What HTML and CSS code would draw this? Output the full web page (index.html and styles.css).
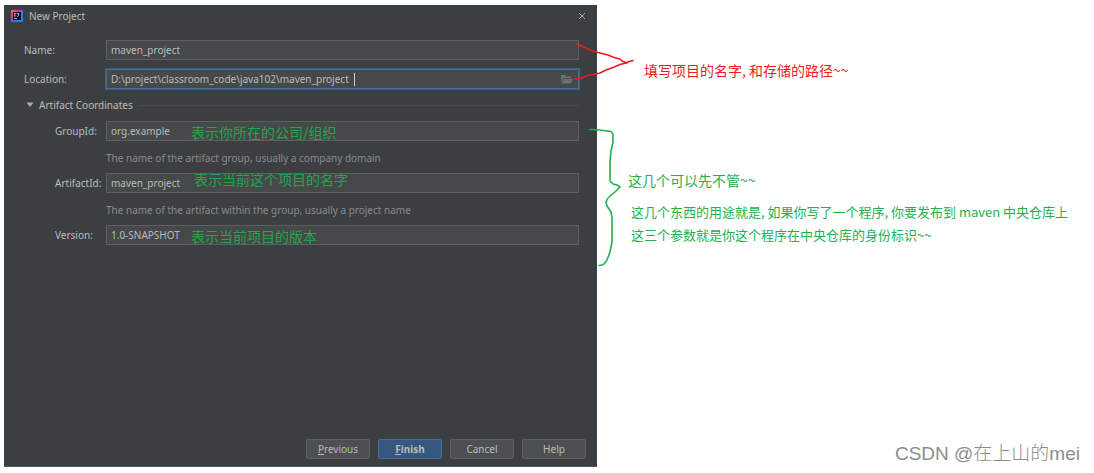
FILE: index.html
```html
<!DOCTYPE html>
<html lang="zh-CN">
<head>
    <meta charset="UTF-8">
    <title>New Project</title>
    <link rel="stylesheet" href="styles.css">
</head>
<body>
    <div class="page">
        <form class="dialog">
            <header class="titlebar">
                <svg class="logo" viewBox="0 0 12 12" aria-hidden="true">
                    <defs>
                        <linearGradient id="logoFill" x1="0" y1="0" x2="1" y2="1">
                            <stop offset="0" stop-color="#f97a3c"/>
                            <stop offset="0.3" stop-color="#e0348c"/>
                            <stop offset="0.55" stop-color="#3b6cf0"/>
                            <stop offset="1" stop-color="#1c8bf5"/>
                        </linearGradient>
                    </defs>
                    <rect width="12" height="12" rx="1" fill="url(#logoFill)"/>
                    <rect x="2" y="2" width="8" height="8" fill="#140a1e"/>
                    <path d="M3 3.5h1.6M3.8 3.5v2.6M3 6.1h1.6M5.8 3.5h1.8v2q0 .7-.8.7h-1M3 8.6h3" fill="none" stroke="#e8e0ee" stroke-width=".8"/>
                </svg>
                <h1>New Project</h1>
                <button type="button" class="close" aria-label="Close">
                    <svg viewBox="0 0 8 8"><path d="M1 1l6 6M7 1l-6 6"/></svg>
                </button>
            </header>

            <div class="fields">
                <div class="row">
                    <label for="name">Name:</label>
                    <div class="control"><input type="text" id="name" value="maven_project"></div>
                </div>
                <div class="row">
                    <label for="location">Location:</label>
                    <div class="control active">
                        <input type="text" id="location" value="D:\project\classroom_code\java102\maven_project">
                        <span class="caret"></span>
                        <svg class="folder" viewBox="0 0 12 10" aria-hidden="true">
                            <path d="M0 1h4l1 1.500h5V4H2.500L0 8.500z"/>
                            <path d="M3 4.800h9L10 9.500H.5z"/>
                        </svg>
                    </div>
                </div>
            </div>

            <details class="coords" open>
                <summary>
                    <svg class="arrow" viewBox="0 0 8 6" aria-hidden="true"><path d="M0.500 0.500h7L4 5z"/></svg>
                    Artifact Coordinates
                </summary>
                <div class="row">
                    <label for="groupId">GroupId:</label>
                    <div class="control">
                        <input type="text" id="groupId" value="org.example">
                        <span class="remark">表示你所在的公司/组织</span>
                    </div>
                </div>
                <p class="hint">The name of the artifact group, usually a company domain</p>
                <div class="row">
                    <label for="artifactId">ArtifactId:</label>
                    <div class="control">
                        <input type="text" id="artifactId" value="maven_project">
                        <span class="remark raised">表示当前这个项目的名字</span>
                    </div>
                </div>
                <p class="hint">The name of the artifact within the group, usually a project name</p>
                <div class="row">
                    <label for="version">Version:</label>
                    <div class="control">
                        <input type="text" id="version" value="1.0-SNAPSHOT">
                        <span class="remark">表示当前项目的版本</span>
                    </div>
                </div>
            </details>

            <footer class="buttons">
                <button type="button"><u>P</u>revious</button>
                <button type="button" class="primary"><u>F</u>inish</button>
                <button type="button">Cancel</button>
                <button type="button">Help</button>
            </footer>

            <svg class="strokes" viewBox="570 40 70 230" aria-hidden="true">
                <path class="red" d="M577 44L583 46.500L590 50L598 52.500L608 55L614 57.500L620 59L622 61L627 63"/>
                <path class="red" d="M574 79L580 78.500L588 75.500L600 73L606 70L613 67.500L620 64.500L626 63L629 61.500L633 60.500"/>
                <path class="green" d="M590 129.500L600 130L607 131L611 131.500L613 134V142L611 151L610 162V181L613 184L617 185L620 187L616 191L608 198L606 202L607 206L611 212L612 218V242L610 252L607 260L604 264L602 265L599 265.500"/>
            </svg>
        </form>

        <section class="notes">
            <p class="note warn">填写项目的名字, 和存储的路径~~</p>
            <p class="note">这几个可以先不管~~</p>
            <p class="note detail">这几个东西的用途就是, 如果你写了一个程序, 你要发布到 maven 中央仓库上<br>这三个参数就是你这个程序在中央仓库的身份标识~~</p>
            <p class="watermark">CSDN @在上山的mei</p>
        </section>
    </div>
</body>
</html>
```
FILE: styles.css
```css
* {
    box-sizing: border-box;
}
body {
    margin: 0;
    background: #fff;
    font-family: "Noto Sans", "Noto Sans CJK SC", sans-serif;
    font-size: 10px;
}
.page {
    display: grid;
    grid-template-columns: 593fr 497fr;
    min-height: 100vh;
    padding: 5px 0 6px 4px;
}
.dialog {
    position: relative;
    display: flex;
    flex-direction: column;
    background: #3c3f41;
    color: #bbb;
    border-bottom: 1px solid #55585a;
}
.titlebar {
    display: flex;
    align-items: center;
    height: 21px;
    padding: 0 11px 0 7px;
}
.titlebar h1 {
    flex: 1;
    margin: 0 0 0 6px;
    font-size: 10px;
    font-weight: normal;
}
.logo {
    width: 12px;
    height: 12px;
}
.close {
    display: flex;
    padding: 0;
    border: none;
    background: none;
}
.close svg {
    width: 8px;
    height: 8px;
    fill: none;
    stroke: #a9abac;
}
.fields {
    display: grid;
    gap: 9px;
    padding: 14px 0 6px;
}
.row {
    display: flex;
    align-items: center;
    height: 20px;
    padding: 0 18px 0 20px;
}
.row label {
    flex: none;
    width: 82px;
}
.control {
    position: relative;
    flex: 1;
}
.control input {
    display: block;
    width: 100%;
    height: 20px;
    padding: 0 4px;
    border: 1px solid #5e6060;
    background: #45494a;
    color: #bbb;
    font: inherit;
    outline: none;
}
.active input {
    border-color: #466d94;
    box-shadow: 0 0 0 1px #3d6185;
}
.caret {
    position: absolute;
    top: 4px;
    left: 248px;
    width: 1px;
    height: 13px;
    background: #ccc;
}
.folder {
    position: absolute;
    top: 5px;
    right: 6px;
    width: 12px;
    height: 10px;
    fill: #6b7073;
}
.coords summary {
    display: flex;
    align-items: center;
    height: 20px;
    margin: 0 18px 6px 22px;
    list-style: none;
}
.coords summary::after {
    content: "";
    flex: 1;
    margin-left: 5px;
    border-top: 1px solid #484b4d;
}
.arrow {
    width: 8px;
    height: 6px;
    margin-right: 5px;
    fill: #adadad;
}
.coords .row {
    padding-left: 51px;
}
.coords label {
    width: 51px;
}
.hint {
    margin: 8px 0 6px 102px;
    line-height: 18px;
    color: #8a8a8a;
}
.remark {
    position: absolute;
    top: 1px;
    left: 85px;
    color: #22a54c;
    font-family: "Noto Sans CJK SC", sans-serif;
    font-size: 14px;
    line-height: 20px;
    white-space: nowrap;
}
.raised {
    top: -4px;
    left: 88px;
}
.buttons {
    display: flex;
    justify-content: flex-end;
    gap: 8px;
    margin-top: auto;
    padding: 0 11px 7px;
}
.buttons button {
    width: 64px;
    height: 20px;
    padding: 0;
    border: 1px solid #5e6060;
    border-radius: 2px;
    background: #4c5052;
    color: #bbb;
    font: inherit;
}
.buttons .primary {
    border-color: #4c708c;
    background: #365880;
    font-weight: bold;
}
.strokes {
    position: absolute;
    top: 35px;
    right: -43px;
    width: 70px;
    height: 230px;
    fill: none;
    stroke-width: 1.6;
    stroke-linecap: round;
    stroke-linejoin: round;
    pointer-events: none;
}
.red {
    stroke: #ed1c24;
}
.green {
    stroke: #22b14c;
}
.notes {
    display: flex;
    flex-direction: column;
    padding-left: 31px;
    font-family: "Noto Sans CJK SC", sans-serif;
}
.note {
    margin: 0;
    color: #22b14c;
    font-size: 14px;
    line-height: 23px;
    white-space: nowrap;
}
.warn {
    margin: 54px 0 87px 16px;
    color: #ed1c24;
}
.detail {
    margin: 8px 0 0 3px;
    font-size: 13px;
}
.watermark {
    margin: auto 14px 0 0;
    color: #8c8c8c;
    font-family: "Liberation Sans", "Noto Sans CJK SC", sans-serif;
    font-size: 19px;
    font-weight: 300;
    line-height: 26px;
    text-align: right;
}
```
